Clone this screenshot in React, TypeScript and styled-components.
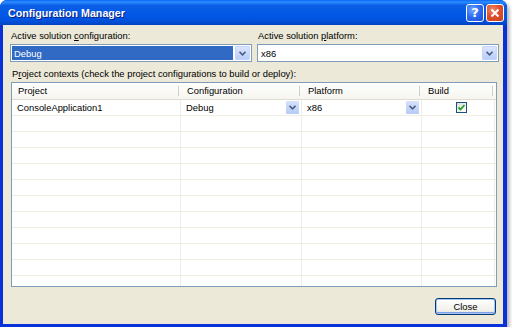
import styled, { createGlobalStyle } from "styled-components";

const GlobalStyle = createGlobalStyle`
  html, body {
    margin: 0;
    padding: 0;
    background: #ffffff;
  }
  body {
    font-family: "Liberation Sans", Arial, sans-serif;
    font-size: 9.4px;
    color: #000;
  }
`;

const rows = [
  { project: "ConsoleApplication1", config: "Debug", platform: "x86", build: true },
  ...Array.from({ length: 11 }, () => null),
];

function Chevron() {
  return (
    <svg width="7" height="5" viewBox="0 0 7 5">
      <path d="M0.5 0.8 L3.5 3.8 L6.5 0.8" fill="none" stroke="#4D6185" strokeWidth="1.6" />
    </svg>
  );
}

function ComboBox({ value, selected }: { value: string; selected?: boolean }) {
  return (
    <Combo>
      <ComboText $selected={selected}>{value}</ComboText>
      <DropButton>
        <Chevron />
      </DropButton>
    </Combo>
  );
}

export default function App() {
  return (
    <>
      <GlobalStyle />
      <Window>
        <TitleBar>
          <Title>Configuration Manager</Title>
          <CaptionButtons>
            <CaptionButton $kind="help">?</CaptionButton>
            <CaptionButton $kind="close">
              <svg width="10" height="10" viewBox="0 0 10 10">
                <path d="M1.5 1.5 L8.5 8.5 M8.5 1.5 L1.5 8.5" stroke="#fff" strokeWidth="2" />
              </svg>
            </CaptionButton>
          </CaptionButtons>
        </TitleBar>
        <Body>
          <FieldGrid>
            <Field>
              <Label>
                Active solution <u>c</u>onfiguration:
              </Label>
              <ComboBox value="Debug" selected />
            </Field>
            <Field>
              <Label>
                Active solution <u>p</u>latform:
              </Label>
              <ComboBox value="x86" />
            </Field>
          </FieldGrid>
          <Label>
            P<u>r</u>oject contexts (check the project configurations to build or deploy):
          </Label>
          <Grid>
            <HeaderRow>
              <HeaderCell>Project</HeaderCell>
              <HeaderCell>Configuration</HeaderCell>
              <HeaderCell>Platform</HeaderCell>
              <HeaderCell>Build</HeaderCell>
            </HeaderRow>
            {rows.map((r, i) => (
              <Row key={i}>
                <Cell>{r?.project}</Cell>
                <Cell>
                  {r && (
                    <>
                      <span>{r.config}</span>
                      <CellDrop>
                        <Chevron />
                      </CellDrop>
                    </>
                  )}
                </Cell>
                <Cell>
                  {r && (
                    <>
                      <span>{r.platform}</span>
                      <CellDrop>
                        <Chevron />
                      </CellDrop>
                    </>
                  )}
                </Cell>
                <Cell $center>
                  {r && (
                    <CheckBox>
                      <svg width="9" height="9" viewBox="0 0 9 9">
                        <path d="M1.5 4.5 L3.5 6.5 L7.5 2" fill="none" stroke="#21A121" strokeWidth="1.8" />
                      </svg>
                    </CheckBox>
                  )}
                </Cell>
              </Row>
            ))}
          </Grid>
          <Footer>
            <Button>Close</Button>
          </Footer>
        </Body>
      </Window>
    </>
  );
}

const Window = styled.div`
  width: 507px;
  height: 327px;
  display: flex;
  flex-direction: column;
  background: #0831d9;
  border-radius: 7px 7px 0 0;
  box-shadow: 2px 3px 4px rgba(0, 0, 0, 0.35);
  overflow: hidden;
`;

const TitleBar = styled.div`
  height: 25px;
  flex: none;
  display: flex;
  align-items: center;
  justify-content: space-between;
  padding: 0 3px 0 8px;
  background: linear-gradient(
    to bottom,
    #0a66f5 0%,
    #2b8cff 8%,
    #0a5ee6 22%,
    #0258e6 60%,
    #0250da 85%,
    #0143c4 100%
  );
`;

const Title = styled.span`
  color: #fff;
  font-family: "Liberation Sans", Arial, sans-serif;
  font-weight: bold;
  font-size: 10.7px;
  text-shadow: 1px 1px 0 #0a1e8a;
`;

const CaptionButtons = styled.div`
  display: flex;
  gap: 2px;
`;

const CaptionButton = styled.div<{ $kind: "help" | "close" }>`
  width: 18px;
  height: 18px;
  box-sizing: border-box;
  border: 1px solid #fff;
  border-radius: 3px;
  display: flex;
  align-items: center;
  justify-content: center;
  color: #fff;
  font-family: "DejaVu Sans", sans-serif;
  font-weight: bold;
  font-size: 13px;
  background: ${(p) =>
    p.$kind === "close"
      ? "radial-gradient(circle at 35% 30%, #f08b6a 0%, #e0502c 45%, #c8401c 100%)"
      : "radial-gradient(circle at 35% 30%, #6ea4ff 0%, #2c6af0 50%, #1b50d8 100%)"};
`;

const Body = styled.div`
  flex: 1;
  margin: 0 4px 3px 3px;
  background: #ece9d8;
  padding: 5px 5px 0 8px;
  display: flex;
  flex-direction: column;
`;

const FieldGrid = styled.div`
  display: grid;
  grid-template-columns: 242px 242px;
  gap: 5px;
  margin-left: -1px;
  margin-bottom: 6px;
`;

const Field = styled.div`
  display: flex;
  flex-direction: column;
`;

const Label = styled.div`
  height: 12px;
  line-height: 12px;
  margin-bottom: 2px;
  white-space: nowrap;
  color: #000;
  padding-left: 1px;
`;

const Combo = styled.div`
  height: 18px;
  box-sizing: border-box;
  border: 1px solid #7f9db9;
  background: #fff;
  display: flex;
  align-items: stretch;
  padding: 1px;
`;

const ComboText = styled.div<{ $selected?: boolean }>`
  flex: 1;
  display: flex;
  align-items: center;
  padding-left: 2px;
  margin-right: 2px;
  background: ${(p) => (p.$selected ? "#316ac5" : "transparent")};
  color: ${(p) => (p.$selected ? "#fff" : "#000")};
`;

const DropButton = styled.div`
  width: 15px;
  display: flex;
  align-items: center;
  justify-content: center;
  border-radius: 1px;
  background: linear-gradient(to bottom, #dbe6fd, #b9cdf9);
  border: 1px solid #c4d4fa;
  box-sizing: border-box;
`;

const Grid = styled.div`
  height: 205px;
  flex: none;
  box-sizing: border-box;
  border: 1px solid #7f9db9;
  background: #fff;
  overflow: hidden;
  margin-right: 1px;
`;

const columns = "169px 121px 120px 73px";

const HeaderRow = styled.div`
  display: grid;
  grid-template-columns: ${columns};
  height: 17px;
  box-sizing: border-box;
  border-bottom: 1px solid #dedccf;
  background: linear-gradient(to bottom, #ffffff, #f6f5ef);
`;

const HeaderCell = styled.div`
  position: relative;
  padding-left: 6px;
  line-height: 16px;
  &::after {
    content: "";
    position: absolute;
    right: 2px;
    top: 3px;
    bottom: 3px;
    width: 1px;
    background: #d2d0c3;
  }
`;

const Row = styled.div`
  display: grid;
  grid-template-columns: ${columns};
  height: 16px;
  box-sizing: border-box;
  border-bottom: 1px solid #f0eee2;
`;

const Cell = styled.div<{ $center?: boolean }>`
  display: flex;
  align-items: center;
  justify-content: ${(p) => (p.$center ? "center" : "space-between")};
  padding: 0 2px 0 5px;
  border-right: 1px solid #f0eee2;
  white-space: nowrap;
`;

const CellDrop = styled.div`
  width: 13px;
  height: 13px;
  display: flex;
  align-items: center;
  justify-content: center;
  background: linear-gradient(to bottom, #d6e2fc, #b6cbf8);
  border-radius: 1px;
`;

const CheckBox = styled.div`
  width: 11px;
  height: 11px;
  box-sizing: border-box;
  border: 1px solid #1c5180;
  background: linear-gradient(135deg, #dcdcd7, #fff);
  display: flex;
  align-items: center;
  justify-content: center;
  margin-left: 4px;
`;

const Footer = styled.div`
  display: flex;
  justify-content: flex-end;
  padding: 11px 2px 0 0;
`;

const Button = styled.button`
  width: 61px;
  height: 17px;
  font-family: "Liberation Sans", Arial, sans-serif;
  font-size: 9.4px;
  color: #000;
  border: 1px solid #003c74;
  border-radius: 3px;
  background: linear-gradient(to bottom, #ffffff, #f0efe8 80%, #d6d0c5);
  box-shadow: inset 0 0 0 1px #a8c3f0, inset 0 -1px 0 1px #7ba2e7;
  padding: 0;
`;
